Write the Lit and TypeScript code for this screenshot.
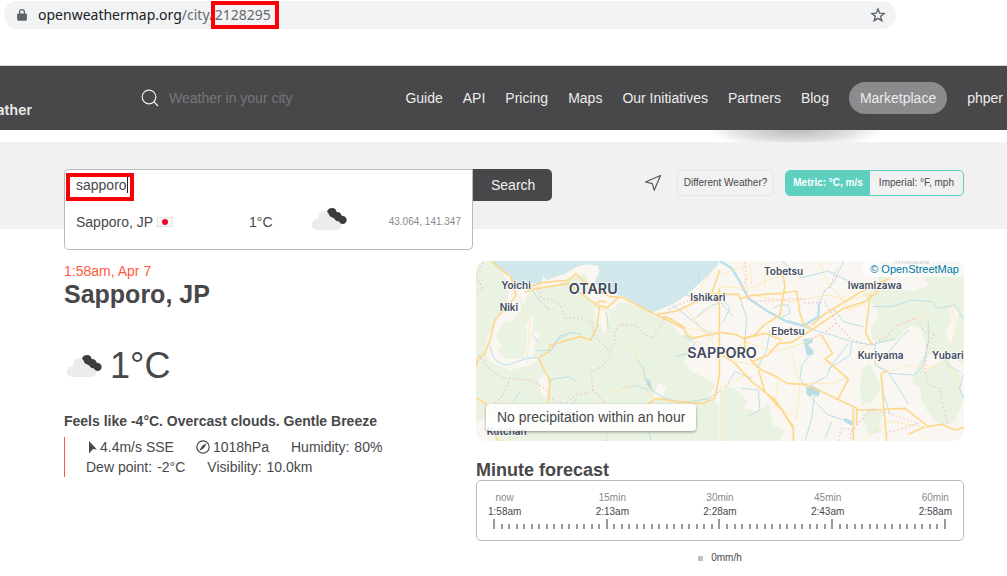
import { LitElement, html, svg, css } from "lit";
import { customElement, state } from "lit/decorators.js";
import { classMap } from "lit/directives/class-map.js";

@customElement("cloud-icon")
class CloudIcon extends LitElement {
  static styles = css`
    :host { display: block; width: 36px; height: 24px; }
    svg { display: block; width: 100%; height: 100%; }
  `;
  render() {
    return html`<svg viewBox="33 171 108 72" aria-hidden="true">
      <path fill="#ececeb" d="M52 240a16 16 0 0 1-1-33h4c-1-14 7-24 19-24 9 0 15 4 19 11l8 7c7-2 14 2 15 8 9 4 10 11 8 18-2 8-7 13-14 13z"/>
      <path fill="#3b3c40" d="M81 185c2-8 9-11 15-11 8 0 13 5 14 12 7-1 14 4 15 11 9 0 15 5 15 12 0 8-6 13-12 13-5 0-9-3-12-8-6 0-10-3-12-7-4-3-7-6-11-6-5-2-6-10-9-13z"/>
    </svg>`;
  }
}

const places = [
  { name: "Yoichi", x: 76, y: 84 },
  { name: "Niki", x: 71, y: 150 },
  { name: "OTARU", x: 278, y: 98, big: true },
  { name: "Ishikari", x: 643, y: 120 },
  { name: "SAPPORO", x: 634, y: 291, big: true },
  { name: "Tobetsu", x: 864, y: 42 },
  { name: "Iwamizawa", x: 1115, y: 83 },
  { name: "Ebetsu", x: 886, y: 222 },
  { name: "Kuriyama", x: 1145, y: 293 },
  { name: "Yubari", x: 1368, y: 293 },
  { name: "Kutchan", x: 32, y: 522 },
  { name: "Mikasa", x: 1256, y: 9, faint: true },
];

@customElement("weather-map")
class WeatherMap extends LitElement {
  static styles = css`
    :host { display: block; position: relative; height: 180px; overflow: hidden; border-radius: 10px; background: #faf7f2; }
    svg { display: block; width: 100%; height: 100%; }
    .water { fill: #d0e8eb; }
    .lake { fill: #b9dce5; }
    .forest { fill: #eaf2e2; }
    .plain { fill: #faf7f2; }
    .river { fill: none; stroke: #b9dfe8; stroke-width: 3; stroke-linejoin: round; }
    .wide { stroke-width: 7; }
    .minor { fill: none; stroke: #fdebbb; stroke-width: 3; stroke-linejoin: round; }
    .road { fill: none; stroke: #fdd98c; stroke-width: 5; stroke-linejoin: round; }
    .border { fill: none; stroke: #efc8cd; stroke-width: 4; stroke-dasharray: 5 7; }
    .place { font: 600 30px "Inter", "Open Sans", sans-serif; fill: #3f4b60; stroke: #fff; stroke-width: 5; stroke-opacity: 0.8; paint-order: stroke; }
    .big { font-size: 43px; }
    .faint { opacity: 0.5; }
    .credit { position: absolute; top: 0; right: 0; padding: 0 5px 0 7px; background: rgba(255, 255, 255, 0.6); font-size: 11px; line-height: 16px; color: #0078a8; text-decoration: none; }
    .notice { position: absolute; left: 10px; bottom: 10px; padding: 0 11px; border-radius: 4px; background: rgba(255, 255, 255, 0.88); box-shadow: 0 1px 3px rgba(0, 0, 0, 0.4); font-size: 14px; line-height: 27px; color: #48484a; }
  `;
  render() {
    return html`
      <svg viewBox="0 0 1464 540" preserveAspectRatio="xMidYMid slice" role="img" aria-label="Map of Sapporo">
        <g transform="translate(-18 -18)">
          <path class="forest" d="M18 18H60L95 50 118 85 112 140 85 185 55 240 45 290 60 320 120 345 180 330 215 310 172 298 165 308 110 312 82 285 95 275 78 240 105 200 130 195 150 170 168 130 180 110 205 98 260 90 290 70 350 55 352 78 365 100 350 120 380 155 430 165 448 140 500 150 560 185 600 205 632 240 665 250 655 290 640 320 665 350 700 365 735 390 715 425 748 450 748 558H18Z"/>
          <path class="plain" d="M18 505 40 490 80 515 75 558H18ZM168 210l25-35-8 60 30-5-20 30-4 40-28 2 8-50ZM370 160l50 10-8 40-10 35-8-30-15-20ZM205 370l25-12 6 45-8 30-14-20ZM565 380l25 18-15 32-25 0Z"/>
          <path class="water" d="M65 18 85 35 102 50 122 60 128 92 150 97 186 84 200 88 214 84 220 62 230 76 260 64 285 56 305 44 320 36 345 28 385 32 388 50 378 70 374 88 395 98 435 118 470 128 500 150 540 173 572 163 610 146 650 120 680 92 700 75 720 55 742 30 748 18Z"/>
          <path class="river" d="M60 270C65 310 80 325 110 330C150 320 175 302 205 310L245 285 255 260 300 232 335 238M185 100C200 130 220 150 240 165M185 238l20 22M300 235l-30 8-25 42-45 3M235 375l60-10 25 15M150 410l-20 30M320 430l-20 25M500 310l20 30 8 40 25 30 30 20 60 12 70-10 40-25M455 400l45-8 50 18M410 170l5 55M610 150l60 50 60 45M650 120l30 10M680 185l45-35 25-5M640 240l35 25-20 30-40 10M530 500l12 55M686 88v-30"/>
          <path class="lake" d="M530 370l12 10 4 25-16-14z"/>
          <path class="minor" d="M120 90 150 130 160 170 180 200 172 305M405 160 412 220 440 245 495 275 510 345 550 430M590 190 650 220 750 235M640 150 750 290M660 200 740 150M410 415l50-15 30-5M550 430l-60 60-40 30M730 40l-40 60M605 190l100 90"/>
          <path class="road" d="M65 18C85 40 95 48 122 66L140 98 165 100 220 82 295 76 317 56 340 78 370 100 420 125 460 128 530 165 580 190 640 220 650 240 665 250 720 238 750 234M165 112 200 100 295 86 345 125 385 152 412 158 445 128M375 152 388 138 410 140M388 155 382 215 362 255 330 245 243 270 235 290 205 310 225 350 240 375 235 445M122 66 138 122 120 145 75 195 60 255 45 295 25 310 18 335M562 178 620 168 690 135 720 118 742 115M565 185 600 190 645 218M748 100V360L735 430 700 445 620 440 560 430 520 455M18 430l30 15 15 60 20 53M725 115l25-70"/>
          <path class="border" d="M40 22 18 60 38 100 22 118M205 100 215 130 245 135 270 150 285 188 330 190 365 200 375 245 420 290 420 310 395 335 362 350 370 405 410 445 410 558M420 290 435 260 435 225 455 208 500 212 520 235 545 250 570 215 600 160 635 145 660 135M25 300 60 345 100 370 180 375 230 405 240 430 280 448 320 420 370 408M120 370 100 420 75 445 70 480"/>
        </g>
        <g transform="translate(717 -18)">
          <path class="forest" d="M495 18H747V330L690 290 640 300 625 330 625 350 690 310 735 360 745 440 720 500 690 510 660 500 645 480 620 440 615 400 590 385 600 345 635 290 620 225 590 210 560 235 540 260 490 265 470 250 468 215 490 180 480 150 440 120 488 100 490 60ZM440 345 465 325 475 345 498 395 475 440 440 450 435 410ZM440 480 470 458 510 475 490 510 500 530 460 540ZM15 410 40 395 60 400 100 440 80 460 130 470 160 440 175 510 210 530 190 558H15Z"/>
          <path class="plain" d="M560 18 620 60 640 90 590 110 520 90 500 40ZM700 150l30 20-10 70-15 25-15-30 20-40Z"/>
          <path class="river wide" d="M15 18 50 40 75 80 100 130 160 170 215 200 265 212 310 185 312 145"/>
          <path class="river" d="M312 145 330 105 355 85 385 20M220 195l60 25 70 20 60 20 60 10 70-20M410 260l-5 40-60 40-10 25-40 20-20 15-20-30 5-40 25-30-15-40M165 225l-10 60-25 50M75 130l20 60-5 60M355 160l30 40 60 15M470 155l60 0 60-20 60 5 20 20 50-10 25 40M480 270v60l40 22 35 55 25 40M520 355l80 5 25-30 15-70 0-60M500 365l5 50 20 60M300 400l-10 90-20 68M290 430l50 50 60 20M340 345l60-80M175 160l20-10 25 0 5 25-30 15-20-15M80 400l50 5 5 60-40 20M25 200l20-40-25-30M520 290l60-65M745 360l-12 40 14 30M200 18l60 50 80-20 60 30M30 400 60 350 110 370M350 500l-20 50M685 300l15 30 40 25M15 140 55 185"/>
          <path class="lake" d="M265 252l28-2v12l-14 8 18 18-4 12h-18zM275 395l12 4 4-8 25 15-6 18-16-6-10 8-10-8zM388 488l24 10-2 14-22-12z"/>
          <path class="minor" d="M15 95 100 100 200 60 260 40M80 20l20 100 130 20 110-20 40 10 60-40M110 90 105 20M310 20 350 100 390 140 490 110M15 310 90 260 180 290 250 270 320 240M60 320 120 330 240 220M270 385l80 0 50-20M230 300l25 90-10 100M470 265l-40 20 90 65M370 120l30 45 60-20M130 340l60 30-10 80 70 40M15 400l80-40M525 350l60-20 50 10 60-20M700 130l20 60-5 80-20 20 10 40 35 60M440 558l80-60 120 20M20 60l70-30M150 100V20M630 180 550 210M18 395V558"/>
          <path class="road" d="M15 118 70 118 75 132 110 122 150 118 195 115 245 108 255 175 265 205 290 222M203 60 210 90 195 180 145 212 120 240 85 250 60 238 15 232M200 255 150 235 90 250 90 275 110 320 140 345 180 362 215 385 270 388 330 415 425 460 425 510M15 295 60 325 110 380 180 435 235 515V558M130 345 150 410 200 465 235 520M110 320 160 300 190 265 230 262 290 225 385 160 450 140 490 108M290 210 325 180 430 115 525 70M465 120 452 235 470 268M318 238 353 295 330 312 400 372 370 430M500 355 520 348M498 355 515 558M425 465 470 465 570 460 640 515 680 508 720 525 747 518M415 460V558M580 538 630 515"/>
          <path class="border" d="M90 22 95 70 80 100 110 140 265 130 270 145 330 142 365 205 410 255 465 270 510 250 540 215 600 190 630 230 660 235 635 270 630 350 640 390 675 400 680 440 700 510M365 205 330 230 290 250M345 100 365 40M370 558l10-40 30 5-5 35M410 530l60-70 80 25 60 20-100 30"/>
        </g>
        ${places.map((p) => svg`<text class=${classMap({ place: true, big: !!p.big, faint: !!p.faint })} x=${p.x} y=${p.y}>${p.name}</text>`)}
      </svg>
      <a class="credit" href="#">© OpenStreetMap</a>
      <div class="notice">No precipitation within an hour</div>
    `;
  }
}

const slots = [
  ["now", "1:58am"],
  ["15min", "2:13am"],
  ["30min", "2:28am"],
  ["45min", "2:43am"],
  ["60min", "2:58am"],
];

@customElement("minute-forecast")
class MinuteForecast extends LitElement {
  static styles = css`
    :host { display: block; color: #48484a; }
    h3 { margin: 0; font-size: 18px; line-height: 20px; }
    .chart { border: 1px solid #bababa; border-radius: 5px; padding: 10px 11px 11px; font-size: 10px; }
    .labels { display: flex; justify-content: space-between; text-align: center; line-height: 14px; }
    .slot span { display: block; }
    .offset { color: #8a8a8a; }
    .ticks { display: flex; justify-content: space-between; align-items: flex-end; height: 10px; padding: 0 6px 0 5px; }
    .tick { width: 2px; height: 5px; background: #9a9a9b; }
    .major { height: 10px; }
    .legend { display: flex; justify-content: center; align-items: center; gap: 8px; margin-top: 10px; font-size: 10px; line-height: 14px; }
    .legend i { width: 5px; height: 5px; background: #bfbfbf; }
  `;
  render() {
    return html`
      <h3>Minute forecast</h3>
      <div class="chart">
        <div class="labels">
          ${slots.map(([offset, time]) => html`<div class="slot"><span class="offset">${offset}</span><span>${time}</span></div>`)}
        </div>
        <div class="ticks">
          ${Array.from({ length: 61 }, (_, i) => html`<div class=${classMap({ tick: true, major: i % 15 === 0 })}></div>`)}
        </div>
      </div>
      <div class="legend"><i></i>0mm/h</div>
    `;
  }
}

@customElement("app-root")
class AppRoot extends LitElement {
  static styles = css`
    :host { display: block; min-height: 100vh; background: #fff; color: #48484a; font: 14px/20px "Liberation Sans", Arial, sans-serif; }
    * { box-sizing: border-box; }
    button, input { font: inherit; color: inherit; }
    button { cursor: pointer; }
    a { color: inherit; text-decoration: none; }
    .browser { display: flex; height: 66px; padding: 1px 111px 0 4px; border-bottom: 1px solid #d5d8d6; align-items: flex-start; }
    .address { flex: 1; display: flex; align-items: center; height: 28px; padding: 0 10px 0 12px; border-radius: 14px; background: #f1f3f4; }
    .lock { width: 12px; height: 14px; }
    .url { flex: 1; margin-left: 10px; font: 14px/20px "Noto Sans", Roboto, sans-serif; color: #66696d; }
    .url b { font-weight: 400; color: #202124; }
    .marked { position: relative; }
    .frame { position: absolute; border: 4px solid #fb0007; }
    .url .frame { inset: -4px -8px -5px -4px; }
    .star { width: 16px; height: 16px; }
    nav { display: flex; align-items: center; height: 64px; padding-right: 4px; background: #48484a; color: #ececec; }
    .logo { display: flex; justify-content: flex-end; width: 32px; overflow: hidden; padding-top: 24px; font: 600 14px/20px "Inter", sans-serif; }
    .find { display: flex; align-items: center; gap: 10px; flex: 1; margin-left: 109px; }
    .find svg { width: 18px; height: 18px; flex: none; }
    .find input { width: 160px; padding: 0; border: 0; outline: 0; background: none; }
    .find input::placeholder { color: #767678; opacity: 1; }
    .menu { display: flex; align-items: center; gap: 20px; margin: 0; padding: 0; list-style: none; white-space: nowrap; }
    .pill { display: block; padding: 6px 11px; border-radius: 16px; background: #8b8b8d; }
    .shade { height: 12px; background: radial-gradient(ellipse 88px 18px at 79% 0, rgba(0, 0, 0, 0.27), rgba(0, 0, 0, 0.14) 55%, transparent); }
    .hero { display: flex; justify-content: space-between; align-items: flex-start; padding: 27px 43px 28px 64px; background: #f1f1f1; }
    .search { display: flex; }
    .field { position: relative; width: 409px; }
    .field > input { display: block; width: 100%; height: 32px; padding: 0 11px 2px; border: 1px solid #bababa; border-bottom: 0; border-radius: 5px 0 0 0; background: #fff; outline: 0; }
    .field .frame { left: 2px; top: 4px; width: 68px; height: 28px; z-index: 3; }
    .field .frame::after { content: ""; position: absolute; right: 2px; top: 0; width: 1px; height: 16px; background: #222; }
    .results { position: absolute; z-index: 2; left: 0; right: 0; top: 100%; margin: 0; padding: 5px 11px 18px; list-style: none; background: #fff; border: 1px solid #bababa; border-top: 0; border-radius: 0 0 5px 5px; }
    .result { display: grid; grid-template-columns: 173px 62px 1fr auto; align-items: center; height: 25px; }
    .city { display: flex; align-items: center; gap: 4px; padding-top: 6px; }
    .flag { display: grid; place-items: center; width: 16px; height: 10px; background: #f8f8f8; border: 1px solid #e2e2e2; }
    .flag i { width: 6px; height: 6px; border-radius: 50%; background: #f5002c; }
    .deg { padding-top: 6px; }
    .coords { padding-top: 6px; font-size: 10px; color: #8a8a8a; }
    .submit { height: 32px; padding: 0 17px 0 18px; border: 0; border-radius: 0 5px 5px 0; background: #48484a; color: #f2f2f2; }
    .tools { display: flex; align-items: center; gap: 11px; margin-top: 1px; font-size: 10px; line-height: 14px; }
    .locate { display: flex; padding: 0; border: 0; background: none; margin-right: 4px; }
    .locate svg { width: 18px; height: 18px; }
    .ghost { height: 26px; padding: 0 6px; border: 1px solid #e6e6e6; border-radius: 4px; background: none; }
    .units { display: flex; height: 26px; border: 1px solid #5fd0c0; border-radius: 5px; overflow: hidden; }
    .units button { border: 0; padding: 0 9px; background: none; }
    .units .on { padding: 0 7px; background: #5fd0c0; color: #fff; font-weight: 700; }
    main { display: grid; grid-template-columns: 388fr 488fr; gap: 24px; padding: 32px 43px 0 64px; }
    .date { color: #ff5a3d; display: block; }
    h2 { margin: 0; font-size: 25px; line-height: 26px; }
    .now { display: flex; align-items: center; gap: 8px; padding: 38px 0 24px 2px; font-size: 36px; line-height: 42px; }
    .feels { font-weight: 700; }
    .stats { display: flex; flex-wrap: wrap; gap: 0 22px; margin: 6px 0 0; padding: 0 32px 0 21px; border-left: 1px solid #ff5a3d; list-style: none; }
    .stats li { display: flex; align-items: center; gap: 5px; }
    .stats .wind { gap: 2px; }
    .stats .pressure { gap: 3px; }
    .stats svg { width: 14px; height: 14px; }
    .stats .wind svg { width: 12px; height: 14px; }
    .side { display: grid; gap: 19px; }
  `;

  @state() private units = "metric";
  @state() private query = "sapporo";

  render() {
    return html`
      <header>
        <div class="browser">
          <div class="address">
            <svg class="lock" viewBox="0 0 12 14"><path fill="#5f6368" d="M3 5.500V4a3 3 0 0 1 6 0v1.500h.6c.8 0 1.300.5 1.300 1.200v4.800c0 .7-.5 1.200-1.300 1.200H2.400c-.8 0-1.300-.5-1.300-1.200V6.700c0-.7.5-1.200 1.300-1.200zM4.300 5.500h3.400V4a1.700 1.700 0 0 0-3.400 0z"/></svg>
            <div class="url"><b>openweathermap.org</b>/city/<span class="marked">2128295<span class="frame"></span></span></div>
            <svg class="star" viewBox="0 0 16 16"><path fill="none" stroke="#5f6368" stroke-width="1.400" d="M8 2 9.700 6.200 14.100 6.500 10.700 9.300 11.800 13.700 8 11.300 4.200 13.700 5.300 9.300 1.900 6.500 6.300 6.200z"/></svg>
          </div>
        </div>
        <nav>
          <a class="logo" href="#">ather</a>
          <label class="find">
            <svg viewBox="0 0 18 18" fill="none" stroke="#f0f0f0" stroke-width="1.200" aria-hidden="true"><circle cx="8" cy="8" r="6.800"/><path d="M12.900 12.900 17 17"/></svg>
            <input type="text" placeholder="Weather in your city" aria-label="Weather in your city" />
          </label>
          <ul class="menu">
            ${["Guide", "API", "Pricing", "Maps", "Our Initiatives", "Partners", "Blog"].map((t) => html`<li><a href="#">${t}</a></li>`)}
            <li><a class="pill" href="#">Marketplace</a></li>
            <li><a href="#">phper</a></li>
          </ul>
        </nav>
      </header>
      <div class="shade"></div>
      <section class="hero">
        <form class="search" @submit=${(e: Event) => e.preventDefault()}>
          <div class="field">
            <input type="text" aria-label="Search city" .value=${this.query} @input=${(e: any) => (this.query = e.target.value)} />
            <span class="frame"></span>
            <ul class="results">
              <li class="result">
                <span class="city">Sapporo, JP <span class="flag"><i></i></span></span>
                <span class="deg">1°C</span>
                <cloud-icon></cloud-icon>
                <span class="coords">43.064, 141.347</span>
              </li>
            </ul>
          </div>
          <button class="submit" type="submit">Search</button>
        </form>
        <div class="tools">
          <button class="locate" aria-label="Use my location">
            <svg viewBox="0 0 18 18" fill="none" stroke="#58585a" stroke-width="1.200" stroke-linejoin="round"><path d="M16.500 1.500 1.500 8 8.300 9.700 10.200 16.300z"/></svg>
          </button>
          <button class="ghost">Different Weather?</button>
          <div class="units">
            <button class=${classMap({ on: this.units === "metric" })} @click=${() => (this.units = "metric")}>Metric: °C, m/s</button>
            <button class=${classMap({ on: this.units === "imperial" })} @click=${() => (this.units = "imperial")}>Imperial: °F, mph</button>
          </div>
        </div>
      </section>
      <main>
        <section>
          <span class="date">1:58am, Apr 7</span>
          <h2>Sapporo, JP</h2>
          <div class="now"><cloud-icon></cloud-icon>1°C</div>
          <div class="feels">Feels like -4°C. Overcast clouds. Gentle Breeze</div>
          <ul class="stats">
            <li class="wind"><svg viewBox="0 0 12 14"><path fill="#48484a" d="M3 1 11 9.500 7 9 3 13.500z"/></svg>4.4m/s SSE</li>
            <li class="pressure"><svg viewBox="0 0 14 14"><circle cx="7" cy="7" r="6.200" fill="none" stroke="#48484a" stroke-width="1.200"/><path fill="#48484a" d="M10.800 3.200 8 8 6.200 9.200 3.200 10.800 6 6 7.800 4.800z"/></svg>1018hPa</li>
            <li><span>Humidity:</span>80%</li>
            <li><span>Dew point:</span>-2°C</li>
            <li><span>Visibility:</span>10.0km</li>
          </ul>
        </section>
        <section class="side">
          <weather-map></weather-map>
          <minute-forecast></minute-forecast>
        </section>
      </main>
    `;
  }
}
